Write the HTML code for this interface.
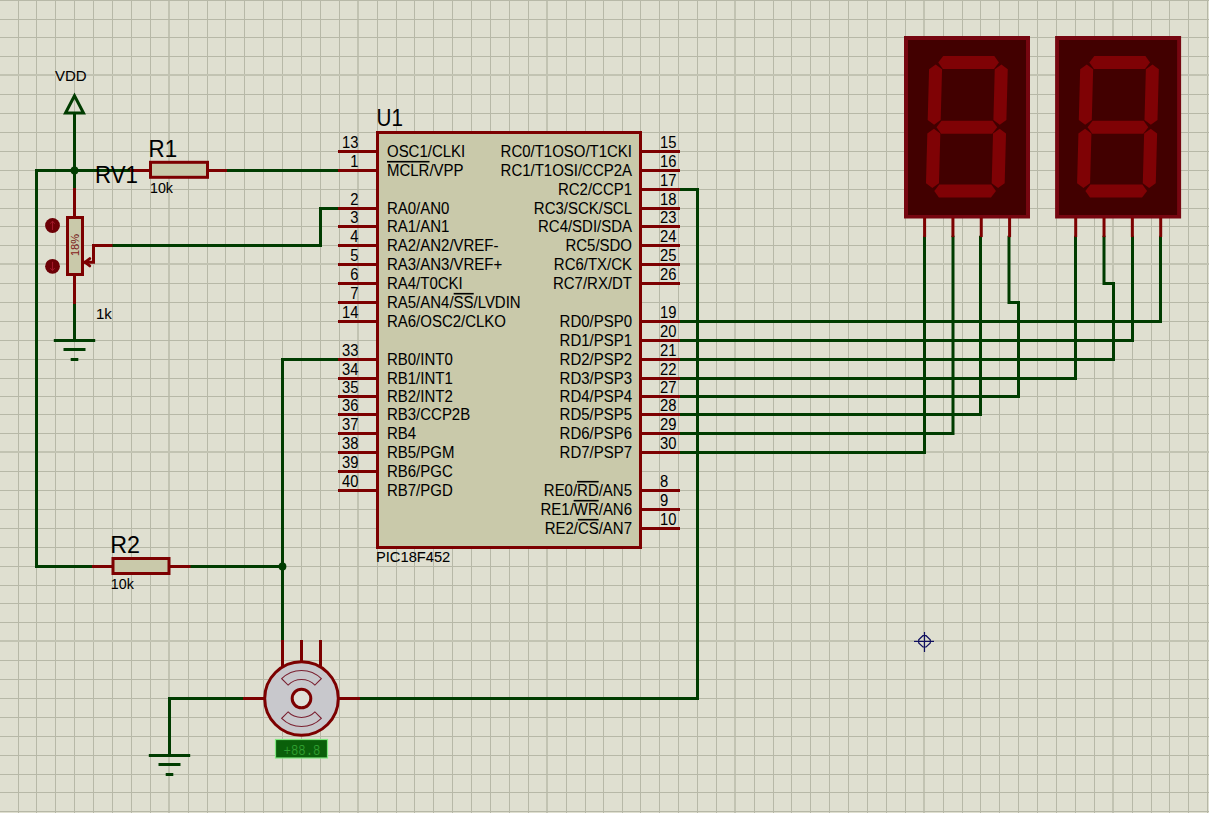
<!DOCTYPE html>
<html><head><meta charset="utf-8"><style>
html,body{margin:0;padding:0;background:#dfdfd0;overflow:hidden}
svg{display:block}
</style></head><body>
<svg width="1209" height="813" viewBox="0 0 1209 813">
<rect width="1209" height="813" fill="#dfdfd0"/>
<g shape-rendering="crispEdges"><rect x="-1" y="0" width="1" height="813" fill="#b7b8a7"/><rect x="18" y="0" width="1" height="813" fill="#b7b8a7"/><rect x="36" y="0" width="1" height="813" fill="#b7b8a7"/><rect x="55" y="0" width="1" height="813" fill="#b7b8a7"/><rect x="74" y="0" width="1" height="813" fill="#b7b8a7"/><rect x="93" y="0" width="1" height="813" fill="#b7b8a7"/><rect x="112" y="0" width="1" height="813" fill="#b7b8a7"/><rect x="131" y="0" width="1" height="813" fill="#b7b8a7"/><rect x="150" y="0" width="1" height="813" fill="#b7b8a7"/><rect x="168" y="0" width="2" height="813" fill="#c2c3b2"/><rect x="188" y="0" width="1" height="813" fill="#b7b8a7"/><rect x="207" y="0" width="1" height="813" fill="#b7b8a7"/><rect x="225" y="0" width="1" height="813" fill="#b7b8a7"/><rect x="244" y="0" width="1" height="813" fill="#b7b8a7"/><rect x="263" y="0" width="1" height="813" fill="#b7b8a7"/><rect x="282" y="0" width="1" height="813" fill="#b7b8a7"/><rect x="301" y="0" width="1" height="813" fill="#b7b8a7"/><rect x="320" y="0" width="1" height="813" fill="#b7b8a7"/><rect x="339" y="0" width="1" height="813" fill="#b7b8a7"/><rect x="357" y="0" width="2" height="813" fill="#c2c3b2"/><rect x="377" y="0" width="1" height="813" fill="#b7b8a7"/><rect x="396" y="0" width="1" height="813" fill="#b7b8a7"/><rect x="414" y="0" width="1" height="813" fill="#b7b8a7"/><rect x="433" y="0" width="1" height="813" fill="#b7b8a7"/><rect x="452" y="0" width="1" height="813" fill="#b7b8a7"/><rect x="471" y="0" width="1" height="813" fill="#b7b8a7"/><rect x="490" y="0" width="1" height="813" fill="#b7b8a7"/><rect x="509" y="0" width="1" height="813" fill="#b7b8a7"/><rect x="528" y="0" width="1" height="813" fill="#b7b8a7"/><rect x="546" y="0" width="2" height="813" fill="#c2c3b2"/><rect x="566" y="0" width="1" height="813" fill="#b7b8a7"/><rect x="585" y="0" width="1" height="813" fill="#b7b8a7"/><rect x="603" y="0" width="1" height="813" fill="#b7b8a7"/><rect x="622" y="0" width="1" height="813" fill="#b7b8a7"/><rect x="640" y="0" width="1" height="813" fill="#b7b8a7"/><rect x="659" y="0" width="1" height="813" fill="#b7b8a7"/><rect x="678" y="0" width="1" height="813" fill="#b7b8a7"/><rect x="697" y="0" width="1" height="813" fill="#b7b8a7"/><rect x="716" y="0" width="1" height="813" fill="#b7b8a7"/><rect x="734" y="0" width="2" height="813" fill="#c2c3b2"/><rect x="754" y="0" width="1" height="813" fill="#b7b8a7"/><rect x="773" y="0" width="1" height="813" fill="#b7b8a7"/><rect x="791" y="0" width="1" height="813" fill="#b7b8a7"/><rect x="810" y="0" width="1" height="813" fill="#b7b8a7"/><rect x="829" y="0" width="1" height="813" fill="#b7b8a7"/><rect x="848" y="0" width="1" height="813" fill="#b7b8a7"/><rect x="867" y="0" width="1" height="813" fill="#b7b8a7"/><rect x="886" y="0" width="1" height="813" fill="#b7b8a7"/><rect x="905" y="0" width="1" height="813" fill="#b7b8a7"/><rect x="923" y="0" width="2" height="813" fill="#c2c3b2"/><rect x="943" y="0" width="1" height="813" fill="#b7b8a7"/><rect x="962" y="0" width="1" height="813" fill="#b7b8a7"/><rect x="980" y="0" width="1" height="813" fill="#b7b8a7"/><rect x="999" y="0" width="1" height="813" fill="#b7b8a7"/><rect x="1018" y="0" width="1" height="813" fill="#b7b8a7"/><rect x="1037" y="0" width="1" height="813" fill="#b7b8a7"/><rect x="1056" y="0" width="1" height="813" fill="#b7b8a7"/><rect x="1075" y="0" width="1" height="813" fill="#b7b8a7"/><rect x="1094" y="0" width="1" height="813" fill="#b7b8a7"/><rect x="1112" y="0" width="2" height="813" fill="#c2c3b2"/><rect x="1132" y="0" width="1" height="813" fill="#b7b8a7"/><rect x="1151" y="0" width="1" height="813" fill="#b7b8a7"/><rect x="1169" y="0" width="1" height="813" fill="#b7b8a7"/><rect x="1188" y="0" width="1" height="813" fill="#b7b8a7"/><rect x="1207" y="0" width="1" height="813" fill="#b7b8a7"/><rect x="1226" y="0" width="1" height="813" fill="#b7b8a7"/><rect x="0" y="0" width="1209" height="1" fill="#b7b8a7"/><rect x="0" y="19" width="1209" height="1" fill="#b7b8a7"/><rect x="0" y="37" width="1209" height="1" fill="#b7b8a7"/><rect x="0" y="56" width="1209" height="1" fill="#b7b8a7"/><rect x="0" y="74" width="1209" height="2" fill="#c2c3b2"/><rect x="0" y="94" width="1209" height="1" fill="#b7b8a7"/><rect x="0" y="113" width="1209" height="1" fill="#b7b8a7"/><rect x="0" y="132" width="1209" height="1" fill="#b7b8a7"/><rect x="0" y="151" width="1209" height="1" fill="#b7b8a7"/><rect x="0" y="170" width="1209" height="1" fill="#b7b8a7"/><rect x="0" y="189" width="1209" height="1" fill="#b7b8a7"/><rect x="0" y="208" width="1209" height="1" fill="#b7b8a7"/><rect x="0" y="226" width="1209" height="1" fill="#b7b8a7"/><rect x="0" y="245" width="1209" height="1" fill="#b7b8a7"/><rect x="0" y="263" width="1209" height="2" fill="#c2c3b2"/><rect x="0" y="283" width="1209" height="1" fill="#b7b8a7"/><rect x="0" y="302" width="1209" height="1" fill="#b7b8a7"/><rect x="0" y="321" width="1209" height="1" fill="#b7b8a7"/><rect x="0" y="340" width="1209" height="1" fill="#b7b8a7"/><rect x="0" y="359" width="1209" height="1" fill="#b7b8a7"/><rect x="0" y="378" width="1209" height="1" fill="#b7b8a7"/><rect x="0" y="396" width="1209" height="1" fill="#b7b8a7"/><rect x="0" y="414" width="1209" height="1" fill="#b7b8a7"/><rect x="0" y="433" width="1209" height="1" fill="#b7b8a7"/><rect x="0" y="451" width="1209" height="2" fill="#c2c3b2"/><rect x="0" y="471" width="1209" height="1" fill="#b7b8a7"/><rect x="0" y="490" width="1209" height="1" fill="#b7b8a7"/><rect x="0" y="509" width="1209" height="1" fill="#b7b8a7"/><rect x="0" y="528" width="1209" height="1" fill="#b7b8a7"/><rect x="0" y="547" width="1209" height="1" fill="#b7b8a7"/><rect x="0" y="566" width="1209" height="1" fill="#b7b8a7"/><rect x="0" y="585" width="1209" height="1" fill="#b7b8a7"/><rect x="0" y="603" width="1209" height="1" fill="#b7b8a7"/><rect x="0" y="622" width="1209" height="1" fill="#b7b8a7"/><rect x="0" y="640" width="1209" height="2" fill="#c2c3b2"/><rect x="0" y="660" width="1209" height="1" fill="#b7b8a7"/><rect x="0" y="679" width="1209" height="1" fill="#b7b8a7"/><rect x="0" y="698" width="1209" height="1" fill="#b7b8a7"/><rect x="0" y="717" width="1209" height="1" fill="#b7b8a7"/><rect x="0" y="736" width="1209" height="1" fill="#b7b8a7"/><rect x="0" y="755" width="1209" height="1" fill="#b7b8a7"/><rect x="0" y="774" width="1209" height="1" fill="#b7b8a7"/><rect x="0" y="792" width="1209" height="1" fill="#b7b8a7"/><rect x="0" y="811" width="1209" height="1" fill="#b7b8a7"/><rect x="0" y="829" width="1209" height="2" fill="#c2c3b2"/></g>
<g><polyline points="36.5,566.5 36.5,170.5 131.5,170.5" stroke="#003c00" stroke-width="3" fill="none" stroke-linejoin="miter" stroke-linecap="square"/><polyline points="225.5,170.5 339.5,170.5" stroke="#003c00" stroke-width="3" fill="none" stroke-linejoin="miter" stroke-linecap="square"/><polyline points="74.5,113.5 74.5,189.5" stroke="#003c00" stroke-width="3" fill="none" stroke-linejoin="miter" stroke-linecap="square"/><polyline points="36.5,566.5 92,566.5" stroke="#003c00" stroke-width="3" fill="none" stroke-linejoin="miter" stroke-linecap="square"/><polyline points="190.5,566.5 282.5,566.5" stroke="#003c00" stroke-width="3" fill="none" stroke-linejoin="miter" stroke-linecap="square"/><polyline points="339.5,359.5 282.5,359.5 282.5,641.5" stroke="#003c00" stroke-width="3" fill="none" stroke-linejoin="miter" stroke-linecap="square"/><polyline points="112.5,245.5 320.5,245.5 320.5,208.5 339.5,208.5" stroke="#003c00" stroke-width="3" fill="none" stroke-linejoin="miter" stroke-linecap="square"/><polyline points="74.5,302.5 74.5,340.5" stroke="#003c00" stroke-width="3" fill="none" stroke-linejoin="miter" stroke-linecap="square"/><polyline points="244.5,698.5 169.5,698.5 169.5,755.5" stroke="#003c00" stroke-width="3" fill="none" stroke-linejoin="miter" stroke-linecap="square"/><polyline points="358.5,698.5 697.5,698.5 697.5,189.5 678.5,189.5" stroke="#003c00" stroke-width="3" fill="none" stroke-linejoin="miter" stroke-linecap="square"/><polyline points="678.5,321.5 1160.5,321.5 1160.5,237.14" stroke="#003c00" stroke-width="3" fill="none" stroke-linejoin="miter" stroke-linecap="square"/><polyline points="678.5,340.5 1132.5,340.5 1132.5,237.14" stroke="#003c00" stroke-width="3" fill="none" stroke-linejoin="miter" stroke-linecap="square"/><polyline points="678.5,359.5 1113.5,359.5 1113.5,283.5 1104,283.5 1104,237.14" stroke="#003c00" stroke-width="3" fill="none" stroke-linejoin="miter" stroke-linecap="square"/><polyline points="678.5,378.5 1075.5,378.5 1075.5,237.14" stroke="#003c00" stroke-width="3" fill="none" stroke-linejoin="miter" stroke-linecap="square"/><polyline points="678.5,396.5 1018.5,396.5 1018.5,302.5 1009,302.5 1009,237.14" stroke="#003c00" stroke-width="3" fill="none" stroke-linejoin="miter" stroke-linecap="square"/><polyline points="678.5,414.5 980.5,414.5 980.5,237.14" stroke="#003c00" stroke-width="3" fill="none" stroke-linejoin="miter" stroke-linecap="square"/><polyline points="678.5,433.5 953,433.5 953,237.14" stroke="#003c00" stroke-width="3" fill="none" stroke-linejoin="miter" stroke-linecap="square"/><polyline points="678.5,452.5 924.5,452.5 924.5,237.14" stroke="#003c00" stroke-width="3" fill="none" stroke-linejoin="miter" stroke-linecap="square"/></g>
<g><rect x="377.5" y="132.5" width="263" height="415" fill="#c9c9aa" stroke="#7c0000" stroke-width="3"/><line x1="339.5" y1="151.5" x2="377.5" y2="151.5" stroke="#7c0000" stroke-width="3" stroke-linecap="square"/><line x1="339.5" y1="170.5" x2="377.5" y2="170.5" stroke="#7c0000" stroke-width="3" stroke-linecap="square"/><rect x="387" y="160.9" width="42.5" height="1.6" fill="#000"/><line x1="339.5" y1="208.5" x2="377.5" y2="208.5" stroke="#7c0000" stroke-width="3" stroke-linecap="square"/><line x1="339.5" y1="226.5" x2="377.5" y2="226.5" stroke="#7c0000" stroke-width="3" stroke-linecap="square"/><line x1="339.5" y1="245.5" x2="377.5" y2="245.5" stroke="#7c0000" stroke-width="3" stroke-linecap="square"/><line x1="339.5" y1="264.5" x2="377.5" y2="264.5" stroke="#7c0000" stroke-width="3" stroke-linecap="square"/><line x1="339.5" y1="283.5" x2="377.5" y2="283.5" stroke="#7c0000" stroke-width="3" stroke-linecap="square"/><line x1="339.5" y1="302.5" x2="377.5" y2="302.5" stroke="#7c0000" stroke-width="3" stroke-linecap="square"/><rect x="453.69" y="292.9" width="20.01" height="1.6" fill="#000"/><line x1="339.5" y1="321.5" x2="377.5" y2="321.5" stroke="#7c0000" stroke-width="3" stroke-linecap="square"/><line x1="339.5" y1="359.5" x2="377.5" y2="359.5" stroke="#7c0000" stroke-width="3" stroke-linecap="square"/><line x1="339.5" y1="378.5" x2="377.5" y2="378.5" stroke="#7c0000" stroke-width="3" stroke-linecap="square"/><line x1="339.5" y1="396.5" x2="377.5" y2="396.5" stroke="#7c0000" stroke-width="3" stroke-linecap="square"/><line x1="339.5" y1="414.5" x2="377.5" y2="414.5" stroke="#7c0000" stroke-width="3" stroke-linecap="square"/><line x1="339.5" y1="433.5" x2="377.5" y2="433.5" stroke="#7c0000" stroke-width="3" stroke-linecap="square"/><line x1="339.5" y1="452.5" x2="377.5" y2="452.5" stroke="#7c0000" stroke-width="3" stroke-linecap="square"/><line x1="339.5" y1="471.5" x2="377.5" y2="471.5" stroke="#7c0000" stroke-width="3" stroke-linecap="square"/><line x1="339.5" y1="490.5" x2="377.5" y2="490.5" stroke="#7c0000" stroke-width="3" stroke-linecap="square"/><line x1="640.5" y1="151.5" x2="678.5" y2="151.5" stroke="#7c0000" stroke-width="3" stroke-linecap="square"/><line x1="640.5" y1="170.5" x2="678.5" y2="170.5" stroke="#7c0000" stroke-width="3" stroke-linecap="square"/><line x1="640.5" y1="189.5" x2="678.5" y2="189.5" stroke="#7c0000" stroke-width="3" stroke-linecap="square"/><line x1="640.5" y1="208.5" x2="678.5" y2="208.5" stroke="#7c0000" stroke-width="3" stroke-linecap="square"/><line x1="640.5" y1="226.5" x2="678.5" y2="226.5" stroke="#7c0000" stroke-width="3" stroke-linecap="square"/><line x1="640.5" y1="245.5" x2="678.5" y2="245.5" stroke="#7c0000" stroke-width="3" stroke-linecap="square"/><line x1="640.5" y1="264.5" x2="678.5" y2="264.5" stroke="#7c0000" stroke-width="3" stroke-linecap="square"/><line x1="640.5" y1="283.5" x2="678.5" y2="283.5" stroke="#7c0000" stroke-width="3" stroke-linecap="square"/><line x1="640.5" y1="321.5" x2="678.5" y2="321.5" stroke="#7c0000" stroke-width="3" stroke-linecap="square"/><line x1="640.5" y1="340.5" x2="678.5" y2="340.5" stroke="#7c0000" stroke-width="3" stroke-linecap="square"/><line x1="640.5" y1="359.5" x2="678.5" y2="359.5" stroke="#7c0000" stroke-width="3" stroke-linecap="square"/><line x1="640.5" y1="378.5" x2="678.5" y2="378.5" stroke="#7c0000" stroke-width="3" stroke-linecap="square"/><line x1="640.5" y1="396.5" x2="678.5" y2="396.5" stroke="#7c0000" stroke-width="3" stroke-linecap="square"/><line x1="640.5" y1="414.5" x2="678.5" y2="414.5" stroke="#7c0000" stroke-width="3" stroke-linecap="square"/><line x1="640.5" y1="433.5" x2="678.5" y2="433.5" stroke="#7c0000" stroke-width="3" stroke-linecap="square"/><line x1="640.5" y1="452.5" x2="678.5" y2="452.5" stroke="#7c0000" stroke-width="3" stroke-linecap="square"/><line x1="640.5" y1="490.5" x2="678.5" y2="490.5" stroke="#7c0000" stroke-width="3" stroke-linecap="square"/><rect x="576.99" y="480.9" width="21.67" height="1.6" fill="#000"/><line x1="640.5" y1="509.5" x2="678.5" y2="509.5" stroke="#7c0000" stroke-width="3" stroke-linecap="square"/><rect x="573.66" y="499.9" width="24.99" height="1.6" fill="#000"/><line x1="640.5" y1="528.5" x2="678.5" y2="528.5" stroke="#7c0000" stroke-width="3" stroke-linecap="square"/><rect x="577.82" y="518.9" width="20.84" height="1.6" fill="#000"/><circle cx="74.5" cy="170.5" r="3.9" fill="#003c00"/><circle cx="282.5" cy="566.5" r="3.9" fill="#003c00"/><polygon points="74.5,95.8 65.5,113 83.5,113" fill="none" stroke="#003c00" stroke-width="3" stroke-linejoin="miter" stroke-miterlimit="10"/><polyline points="131.5,170.5 150.5,170.5" stroke="#7c0000" stroke-width="3" fill="none" stroke-linejoin="miter" stroke-linecap="square"/><polyline points="207.5,170.5 225.5,170.5" stroke="#7c0000" stroke-width="3" fill="none" stroke-linejoin="miter" stroke-linecap="square"/><rect x="150.5" y="162.3" width="57" height="15" fill="#c9c9aa" stroke="#7c0000" stroke-width="3"/><polyline points="93.5,566.5 113,566.5" stroke="#7c0000" stroke-width="3" fill="none" stroke-linejoin="miter" stroke-linecap="square"/><polyline points="169,566.5 189,566.5" stroke="#7c0000" stroke-width="3" fill="none" stroke-linejoin="miter" stroke-linecap="square"/><rect x="113" y="558.5" width="56" height="15" fill="#c9c9aa" stroke="#7c0000" stroke-width="3"/><polyline points="74.5,189.5 74.5,217.5" stroke="#7c0000" stroke-width="3" fill="none" stroke-linejoin="miter" stroke-linecap="square"/><polyline points="74.5,274.5 74.5,302.5" stroke="#7c0000" stroke-width="3" fill="none" stroke-linejoin="miter" stroke-linecap="square"/><rect x="67.5" y="217.5" width="15" height="57" fill="#c9c9aa" stroke="#7c0000" stroke-width="3"/><polyline points="85,262.2 93.5,262.2 93.5,245.5 111,245.5" stroke="#7c0000" stroke-width="3" fill="none" stroke-linejoin="miter" stroke-linecap="square"/><polyline points="89.8,258.6 85,262.2 89.8,265.9" fill="none" stroke="#7c0000" stroke-width="2.8" stroke-linecap="round"/><circle cx="52.5" cy="225.5" r="7.4" fill="#6c0006"/><line x1="52.5" y1="221" x2="52.5" y2="230" stroke="#a01828" stroke-width="1.1"/><polyline points="50.3,223.7 52.5,221.2 54.7,223.7" fill="none" stroke="#a01828" stroke-width="1"/><circle cx="52.5" cy="266.3" r="7.4" fill="#6c0006"/><line x1="52.5" y1="261.8" x2="52.5" y2="270.8" stroke="#a01828" stroke-width="1.1"/><polyline points="50.3,268.1 52.5,270.6 54.7,268.1" fill="none" stroke="#a01828" stroke-width="1"/><line x1="55.3" y1="340.5" x2="93.7" y2="340.5" stroke="#003c00" stroke-width="3" stroke-linecap="square"/><line x1="65" y1="349.5" x2="84" y2="349.5" stroke="#003c00" stroke-width="3" stroke-linecap="square"/><line x1="72.2" y1="359.5" x2="76.8" y2="359.5" stroke="#003c00" stroke-width="3" stroke-linecap="square"/><line x1="150.3" y1="755.5" x2="188.7" y2="755.5" stroke="#003c00" stroke-width="3" stroke-linecap="square"/><line x1="160" y1="764.5" x2="179" y2="764.5" stroke="#003c00" stroke-width="3" stroke-linecap="square"/><line x1="167.2" y1="774.5" x2="171.8" y2="774.5" stroke="#003c00" stroke-width="3" stroke-linecap="square"/><polyline points="282.5,641.5 282.5,665.5" stroke="#7c0000" stroke-width="3" fill="none" stroke-linejoin="miter" stroke-linecap="square"/><polyline points="301.5,641.5 301.5,662.5" stroke="#7c0000" stroke-width="3" fill="none" stroke-linejoin="miter" stroke-linecap="square"/><polyline points="320.5,641.5 320.5,665.5" stroke="#7c0000" stroke-width="3" fill="none" stroke-linejoin="miter" stroke-linecap="square"/><polyline points="244.5,698.5 265.5,698.5" stroke="#7c0000" stroke-width="3" fill="none" stroke-linejoin="miter" stroke-linecap="square"/><polyline points="337.5,698.5 358.5,698.5" stroke="#7c0000" stroke-width="3" fill="none" stroke-linejoin="miter" stroke-linecap="square"/><circle cx="301.5" cy="698.5" r="36.8" fill="#c8c8cc" stroke="#7c0000" stroke-width="3"/><circle cx="301.5" cy="698.5" r="9.3" fill="#e0e0d8" stroke="#7c0000" stroke-width="3"/><path d="M321.3,678.7 A28,28 0 0 0 281.7,678.7 L288.06,685.06 A19,19 0 0 1 314.94,685.06 Z" fill="none" stroke="#7a2030" stroke-width="1.1"/><path d="M321.3,718.3 A28,28 0 0 1 281.7,718.3 L288.06,711.94 A19,19 0 0 0 314.94,711.94 Z" fill="none" stroke="#7a2030" stroke-width="1.1"/><rect x="275.5" y="739.5" width="52" height="18.5" fill="#0a600a" stroke="#80e880" stroke-width="1.2"/><g stroke="#101060" stroke-width="1.2" fill="none"><line x1="914" y1="641.4" x2="934" y2="641.4"/><line x1="924.5" y1="632" x2="924.5" y2="652"/><polygon points="918.7,639.8 922.9,635.7 926.1,635.7 930.3,639.8 930.3,642.9 926.1,647 922.9,647 918.7,642.9"/></g><rect x="904" y="36" width="126" height="182.5" fill="#760610"/><rect x="908" y="40" width="118" height="175" fill="#420000"/><line x1="924.6" y1="219" x2="924.6" y2="235.6" stroke="#7c0000" stroke-width="3" stroke-linecap="square"/><line x1="952.93" y1="219" x2="952.93" y2="235.6" stroke="#7c0000" stroke-width="3" stroke-linecap="square"/><line x1="981.26" y1="219" x2="981.26" y2="235.6" stroke="#7c0000" stroke-width="3" stroke-linecap="square"/><line x1="1009.59" y1="219" x2="1009.59" y2="235.6" stroke="#7c0000" stroke-width="3" stroke-linecap="square"/><polygon points="938.24,62.5 943.22,56 994.32,56 998.94,62.5 993.97,69 942.87,69" fill="#7f0205"/><polygon points="936.49,127.2 941.47,120.7 992.57,120.7 997.19,127.2 992.22,133.7 941.12,133.7" fill="#7f0205"/><polygon points="934.27,191.1 939.24,184.6 991.34,184.6 995.97,191.1 990.99,197.6 938.89,197.6" fill="#7f0205"/><polygon points="935.69,64.5 942.06,69.3 940.69,119.9 934.06,124.7 927.69,119.9 929.06,69.3" fill="#7f0205"/><polygon points="1001.39,64.5 1007.76,69.3 1006.39,119.9 999.76,124.7 993.39,119.9 994.76,69.3" fill="#7f0205"/><polygon points="933.95,128.7 940.32,133.5 938.98,183.3 932.35,188.1 925.98,183.3 927.32,133.5" fill="#7f0205"/><polygon points="999.65,128.7 1006.02,133.5 1004.68,183.3 998.05,188.1 991.68,183.3 993.02,133.5" fill="#7f0205"/><rect x="1055.1" y="36" width="126" height="182.5" fill="#760610"/><rect x="1059.1" y="40" width="118" height="175" fill="#420000"/><line x1="1075.7" y1="219" x2="1075.7" y2="235.6" stroke="#7c0000" stroke-width="3" stroke-linecap="square"/><line x1="1104.03" y1="219" x2="1104.03" y2="235.6" stroke="#7c0000" stroke-width="3" stroke-linecap="square"/><line x1="1132.36" y1="219" x2="1132.36" y2="235.6" stroke="#7c0000" stroke-width="3" stroke-linecap="square"/><line x1="1160.69" y1="219" x2="1160.69" y2="235.6" stroke="#7c0000" stroke-width="3" stroke-linecap="square"/><polygon points="1089.34,62.5 1094.32,56 1145.42,56 1150.04,62.5 1145.07,69 1093.97,69" fill="#7f0205"/><polygon points="1087.59,127.2 1092.57,120.7 1143.67,120.7 1148.29,127.2 1143.32,133.7 1092.22,133.7" fill="#7f0205"/><polygon points="1085.37,191.1 1090.34,184.6 1142.44,184.6 1147.07,191.1 1142.09,197.6 1089.99,197.6" fill="#7f0205"/><polygon points="1086.79,64.5 1093.16,69.3 1091.79,119.9 1085.16,124.7 1078.79,119.9 1080.16,69.3" fill="#7f0205"/><polygon points="1152.49,64.5 1158.86,69.3 1157.49,119.9 1150.86,124.7 1144.49,119.9 1145.86,69.3" fill="#7f0205"/><polygon points="1085.05,128.7 1091.42,133.5 1090.08,183.3 1083.45,188.1 1077.08,183.3 1078.42,133.5" fill="#7f0205"/><polygon points="1150.75,128.7 1157.12,133.5 1155.78,183.3 1149.15,188.1 1142.78,183.3 1144.12,133.5" fill="#7f0205"/></g>
<g font-family="Liberation Sans, sans-serif" stroke="#000" stroke-width="0.06"><text transform="translate(358.5,148) scale(0.9,1)" font-size="16.4" text-anchor="end" fill="#000000">13</text><text transform="translate(387,156.9) scale(0.96,1)" font-size="15.6" text-anchor="start" fill="#000000">OSC1/CLKI</text><text transform="translate(358.5,167) scale(0.9,1)" font-size="16.4" text-anchor="end" fill="#000000">1</text><text transform="translate(387,175.9) scale(0.96,1)" font-size="15.6" text-anchor="start" fill="#000000">MCLR/VPP</text><text transform="translate(358.5,205) scale(0.9,1)" font-size="16.4" text-anchor="end" fill="#000000">2</text><text transform="translate(387,213.9) scale(0.96,1)" font-size="15.6" text-anchor="start" fill="#000000">RA0/AN0</text><text transform="translate(358.5,223) scale(0.9,1)" font-size="16.4" text-anchor="end" fill="#000000">3</text><text transform="translate(387,231.9) scale(0.96,1)" font-size="15.6" text-anchor="start" fill="#000000">RA1/AN1</text><text transform="translate(358.5,242) scale(0.9,1)" font-size="16.4" text-anchor="end" fill="#000000">4</text><text transform="translate(387,250.9) scale(0.96,1)" font-size="15.6" text-anchor="start" fill="#000000">RA2/AN2/VREF-</text><text transform="translate(358.5,261) scale(0.9,1)" font-size="16.4" text-anchor="end" fill="#000000">5</text><text transform="translate(387,269.9) scale(0.96,1)" font-size="15.6" text-anchor="start" fill="#000000">RA3/AN3/VREF+</text><text transform="translate(358.5,280) scale(0.9,1)" font-size="16.4" text-anchor="end" fill="#000000">6</text><text transform="translate(387,288.9) scale(0.96,1)" font-size="15.6" text-anchor="start" fill="#000000">RA4/T0CKI</text><text transform="translate(358.5,299) scale(0.9,1)" font-size="16.4" text-anchor="end" fill="#000000">7</text><text transform="translate(387,307.9) scale(0.96,1)" font-size="15.6" text-anchor="start" fill="#000000">RA5/AN4/SS/LVDIN</text><text transform="translate(358.5,318) scale(0.9,1)" font-size="16.4" text-anchor="end" fill="#000000">14</text><text transform="translate(387,326.9) scale(0.96,1)" font-size="15.6" text-anchor="start" fill="#000000">RA6/OSC2/CLKO</text><text transform="translate(358.5,356) scale(0.9,1)" font-size="16.4" text-anchor="end" fill="#000000">33</text><text transform="translate(387,364.9) scale(0.96,1)" font-size="15.6" text-anchor="start" fill="#000000">RB0/INT0</text><text transform="translate(358.5,375) scale(0.9,1)" font-size="16.4" text-anchor="end" fill="#000000">34</text><text transform="translate(387,383.9) scale(0.96,1)" font-size="15.6" text-anchor="start" fill="#000000">RB1/INT1</text><text transform="translate(358.5,393) scale(0.9,1)" font-size="16.4" text-anchor="end" fill="#000000">35</text><text transform="translate(387,401.9) scale(0.96,1)" font-size="15.6" text-anchor="start" fill="#000000">RB2/INT2</text><text transform="translate(358.5,411) scale(0.9,1)" font-size="16.4" text-anchor="end" fill="#000000">36</text><text transform="translate(387,419.9) scale(0.96,1)" font-size="15.6" text-anchor="start" fill="#000000">RB3/CCP2B</text><text transform="translate(358.5,430) scale(0.9,1)" font-size="16.4" text-anchor="end" fill="#000000">37</text><text transform="translate(387,438.9) scale(0.96,1)" font-size="15.6" text-anchor="start" fill="#000000">RB4</text><text transform="translate(358.5,449) scale(0.9,1)" font-size="16.4" text-anchor="end" fill="#000000">38</text><text transform="translate(387,457.9) scale(0.96,1)" font-size="15.6" text-anchor="start" fill="#000000">RB5/PGM</text><text transform="translate(358.5,468) scale(0.9,1)" font-size="16.4" text-anchor="end" fill="#000000">39</text><text transform="translate(387,476.9) scale(0.96,1)" font-size="15.6" text-anchor="start" fill="#000000">RB6/PGC</text><text transform="translate(358.5,487) scale(0.9,1)" font-size="16.4" text-anchor="end" fill="#000000">40</text><text transform="translate(387,495.9) scale(0.96,1)" font-size="15.6" text-anchor="start" fill="#000000">RB7/PGD</text><text transform="translate(660,148) scale(0.9,1)" font-size="16.4" text-anchor="start" fill="#000000">15</text><text transform="translate(632,156.9) scale(0.96,1)" font-size="15.6" text-anchor="end" fill="#000000">RC0/T1OSO/T1CKI</text><text transform="translate(660,167) scale(0.9,1)" font-size="16.4" text-anchor="start" fill="#000000">16</text><text transform="translate(632,175.9) scale(0.96,1)" font-size="15.6" text-anchor="end" fill="#000000">RC1/T1OSI/CCP2A</text><text transform="translate(660,186) scale(0.9,1)" font-size="16.4" text-anchor="start" fill="#000000">17</text><text transform="translate(632,194.9) scale(0.96,1)" font-size="15.6" text-anchor="end" fill="#000000">RC2/CCP1</text><text transform="translate(660,205) scale(0.9,1)" font-size="16.4" text-anchor="start" fill="#000000">18</text><text transform="translate(632,213.9) scale(0.96,1)" font-size="15.6" text-anchor="end" fill="#000000">RC3/SCK/SCL</text><text transform="translate(660,223) scale(0.9,1)" font-size="16.4" text-anchor="start" fill="#000000">23</text><text transform="translate(632,231.9) scale(0.96,1)" font-size="15.6" text-anchor="end" fill="#000000">RC4/SDI/SDA</text><text transform="translate(660,242) scale(0.9,1)" font-size="16.4" text-anchor="start" fill="#000000">24</text><text transform="translate(632,250.9) scale(0.96,1)" font-size="15.6" text-anchor="end" fill="#000000">RC5/SDO</text><text transform="translate(660,261) scale(0.9,1)" font-size="16.4" text-anchor="start" fill="#000000">25</text><text transform="translate(632,269.9) scale(0.96,1)" font-size="15.6" text-anchor="end" fill="#000000">RC6/TX/CK</text><text transform="translate(660,280) scale(0.9,1)" font-size="16.4" text-anchor="start" fill="#000000">26</text><text transform="translate(632,288.9) scale(0.96,1)" font-size="15.6" text-anchor="end" fill="#000000">RC7/RX/DT</text><text transform="translate(660,318) scale(0.9,1)" font-size="16.4" text-anchor="start" fill="#000000">19</text><text transform="translate(632,326.9) scale(0.96,1)" font-size="15.6" text-anchor="end" fill="#000000">RD0/PSP0</text><text transform="translate(660,337) scale(0.9,1)" font-size="16.4" text-anchor="start" fill="#000000">20</text><text transform="translate(632,345.9) scale(0.96,1)" font-size="15.6" text-anchor="end" fill="#000000">RD1/PSP1</text><text transform="translate(660,356) scale(0.9,1)" font-size="16.4" text-anchor="start" fill="#000000">21</text><text transform="translate(632,364.9) scale(0.96,1)" font-size="15.6" text-anchor="end" fill="#000000">RD2/PSP2</text><text transform="translate(660,375) scale(0.9,1)" font-size="16.4" text-anchor="start" fill="#000000">22</text><text transform="translate(632,383.9) scale(0.96,1)" font-size="15.6" text-anchor="end" fill="#000000">RD3/PSP3</text><text transform="translate(660,393) scale(0.9,1)" font-size="16.4" text-anchor="start" fill="#000000">27</text><text transform="translate(632,401.9) scale(0.96,1)" font-size="15.6" text-anchor="end" fill="#000000">RD4/PSP4</text><text transform="translate(660,411) scale(0.9,1)" font-size="16.4" text-anchor="start" fill="#000000">28</text><text transform="translate(632,419.9) scale(0.96,1)" font-size="15.6" text-anchor="end" fill="#000000">RD5/PSP5</text><text transform="translate(660,430) scale(0.9,1)" font-size="16.4" text-anchor="start" fill="#000000">29</text><text transform="translate(632,438.9) scale(0.96,1)" font-size="15.6" text-anchor="end" fill="#000000">RD6/PSP6</text><text transform="translate(660,449) scale(0.9,1)" font-size="16.4" text-anchor="start" fill="#000000">30</text><text transform="translate(632,457.9) scale(0.96,1)" font-size="15.6" text-anchor="end" fill="#000000">RD7/PSP7</text><text transform="translate(660,487) scale(0.9,1)" font-size="16.4" text-anchor="start" fill="#000000">8</text><text transform="translate(632,495.9) scale(0.96,1)" font-size="15.6" text-anchor="end" fill="#000000">RE0/RD/AN5</text><text transform="translate(660,506) scale(0.9,1)" font-size="16.4" text-anchor="start" fill="#000000">9</text><text transform="translate(632,514.9) scale(0.96,1)" font-size="15.6" text-anchor="end" fill="#000000">RE1/WR/AN6</text><text transform="translate(660,525) scale(0.9,1)" font-size="16.4" text-anchor="start" fill="#000000">10</text><text transform="translate(632,533.9) scale(0.96,1)" font-size="15.6" text-anchor="end" fill="#000000">RE2/CS/AN7</text><text transform="translate(376.5,125.8) scale(0.86,1)" font-size="24" text-anchor="start" fill="#000000">U1</text><text transform="translate(376,562.2) scale(0.96,1)" font-size="15.3" text-anchor="start" fill="#000000">PIC18F452</text><text x="55" y="81" font-size="15" text-anchor="start" fill="#000000">VDD</text><text transform="translate(148.6,157) scale(0.93,1)" font-size="24" text-anchor="start" fill="#000000">R1</text><text transform="translate(150,192.7) scale(0.95,1)" font-size="15" text-anchor="start" fill="#000000">10k</text><text transform="translate(110.3,552.8) scale(0.97,1)" font-size="24" text-anchor="start" fill="#000000">R2</text><text transform="translate(110.8,588.5) scale(0.95,1)" font-size="15" text-anchor="start" fill="#000000">10k</text><text transform="translate(79,245) rotate(-90)" font-size="11" text-anchor="middle" fill="#8a1a1a">18%</text><text x="96" y="318.5" font-size="15" text-anchor="start" fill="#000000">1k</text><text transform="translate(95,182.7) scale(0.93,1)" font-size="24" text-anchor="start" fill="#000000">RV1</text><text transform="translate(302,755) scale(0.85,1)" font-size="14.5" text-anchor="middle" fill="#30a030" font-family="Liberation Mono, monospace">+88.8</text></g>
</svg></body></html>
